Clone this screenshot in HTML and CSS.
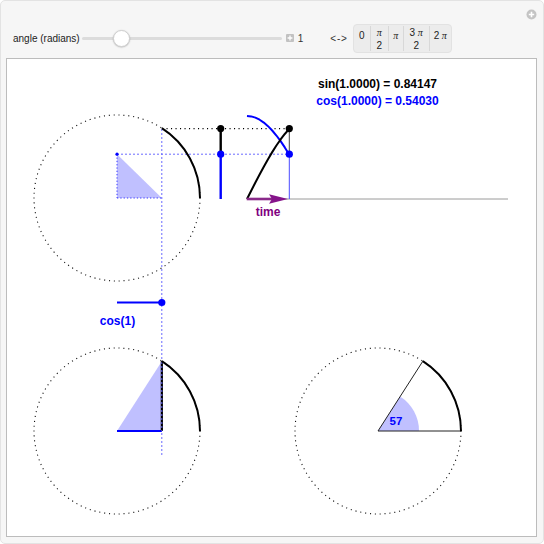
FILE: index.html
```html
<!DOCTYPE html>
<html>
<head>
<meta charset="utf-8">
<link rel="stylesheet" href="styles.css">
</head>
<body>
<div class="panel">
  <div class="corner-plus"><svg width="11" height="11" viewBox="0 0 11 11"><circle cx="5.5" cy="5.5" r="5" fill="#c4c4c4"/><path d="M5.5 2.8v5.4M2.8 5.5h5.4" stroke="#fff" stroke-width="1.6"/></svg></div>
  <div class="controls">
    <span class="label">angle (radians)</span>
    <div class="slider"><div class="track"></div><div class="thumb"></div></div>
    <span class="plus"><svg width="8" height="8" viewBox="0 0 8 8"><rect width="8" height="8" rx="1" fill="#c2c2c2"/><path d="M4 1.6v4.8M1.6 4h4.8" stroke="#fff" stroke-width="1.3"/></svg></span>
    <span class="value">1</span>
    <span class="arrows">&lt;-&gt;</span>
    <div class="group">
      <span class="item w0">0</span>
      <span class="item frac w1"><span class="pi">π</span><span class="bar"></span><span>2</span></span>
      <span class="item w2"><span class="pi">π</span></span>
      <span class="item frac w3"><span>3 <span class="pi">π</span></span><span class="bar"></span><span>2</span></span>
      <span class="item w4">2 <span class="pi">&nbsp;π</span></span>
    </div>
  </div>
  <div class="canvas">
    <svg class="plot" width="529" height="477" viewBox="7 59 529 477">
      <g fill="none" stroke="#111" stroke-width="1.1" stroke-dasharray="1.1 3.8">
        <circle cx="117" cy="198" r="83"/>
        <circle cx="117" cy="431" r="83"/>
        <circle cx="378" cy="431" r="83"/>
      </g>
      <polygon points="117,154.2 117,198 161.8,198" fill="#c0c0ff"/>
      <g fill="none" stroke="#3a3aff" stroke-width="1" stroke-dasharray="1.3 2">
        <line x1="117" y1="154.2" x2="117" y2="198"/>
        <line x1="117" y1="198" x2="161.8" y2="198"/>
      </g>
      <g fill="none" stroke="#6a6aff" stroke-width="1" stroke-dasharray="2 2">
        <line x1="117" y1="154.2" x2="289" y2="154.2"/>
        <line x1="161.8" y1="129" x2="161.8" y2="456"/>
      </g>
      <line x1="162" y1="128.6" x2="289" y2="128.6" stroke="#000" stroke-width="1.1" stroke-dasharray="1.1 3.4"/>
      <circle cx="117" cy="154.2" r="1.6" fill="#0000ff"/>
      <path d="M200 198 A83 83 0 0 0 161.85 128.16" fill="none" stroke="#000" stroke-width="2"/>
      <line x1="220.7" y1="128.6" x2="220.7" y2="154.2" stroke="#000" stroke-width="2.4"/>
      <line x1="220.7" y1="154.2" x2="220.7" y2="199" stroke="#0000ff" stroke-width="2.4"/>
      <circle cx="220.7" cy="128.6" r="3.6" fill="#000"/>
      <circle cx="220.7" cy="154.2" r="3.6" fill="#0000ff"/>
      <line x1="247" y1="199" x2="508" y2="199" stroke="#9a9a9a" stroke-width="1"/>
      <polyline points="247,116 251.2,116.41 255.4,117.65 259.6,119.71 263.8,122.55 268,126.16 272.2,130.5 276.4,135.52 280.6,141.17 284.8,147.41 289,154.16" fill="none" stroke="#0000ff" stroke-width="2" stroke-linejoin="round"/>
      <polyline points="247,199 251.2,190.71 255.4,182.51 259.6,174.47 263.8,166.68 268,159.21 272.2,152.13 276.4,145.53 280.6,139.46 284.8,133.98 289,129.16" fill="none" stroke="#000" stroke-width="2" stroke-linejoin="round"/>
      <line x1="289.3" y1="128.6" x2="289.3" y2="154.2" stroke="#444" stroke-width="1"/>
      <line x1="289.3" y1="154.2" x2="289.3" y2="199" stroke="#4a4aff" stroke-width="1"/>
      <circle cx="289.3" cy="128.6" r="3.6" fill="#000"/>
      <circle cx="289.3" cy="154.2" r="3.6" fill="#0000ff"/>
      <line x1="246.7" y1="199" x2="272" y2="199" stroke="#8a2a8a" stroke-width="2.6"/>
      <polygon points="269,194.2 288,199 269,203.8 272,199" fill="#85148a"/>
      <text class="t-time" x="268" y="216" text-anchor="middle">time</text>
      <text class="t-val" x="377.5" y="87.5" text-anchor="middle" fill="#000">sin(1.0000) = 0.84147</text>
      <text class="t-val" x="377.5" y="104.5" text-anchor="middle" fill="#0000ff">cos(1.0000) = 0.54030</text>
      <line x1="117" y1="302.5" x2="161.8" y2="302.5" stroke="#0000ff" stroke-width="2.2"/>
      <circle cx="161.8" cy="302.5" r="3.6" fill="#0000ff"/>
      <text class="t-cos" x="117.5" y="324.5" text-anchor="middle">cos(1)</text>
      <polygon points="117,431 161.85,361.16 161.85,431" fill="#c0c0ff"/>
      <line x1="117" y1="431" x2="161.85" y2="431" stroke="#0000ff" stroke-width="2.2"/>
      <line x1="161.85" y1="361.16" x2="161.85" y2="431" stroke="#000" stroke-width="2.2"/>
      <line x1="161.8" y1="362" x2="161.8" y2="431" stroke="#6a6aff" stroke-width="1" stroke-dasharray="2 2"/>
      <path d="M200 431 A83 83 0 0 0 161.85 361.16" fill="none" stroke="#000" stroke-width="2"/>
      <path d="M378 431 L419 431 A41 41 0 0 0 400.15 396.5 Z" fill="#c0c0ff"/>
      <line x1="378" y1="431" x2="461" y2="431" stroke="#222" stroke-width="1"/>
      <line x1="378" y1="431" x2="422.85" y2="361.16" stroke="#222" stroke-width="1"/>
      <path d="M461 431 A83 83 0 0 0 422.85 361.16" fill="none" stroke="#000" stroke-width="2"/>
      <text class="t-deg" x="396" y="425" text-anchor="middle">57</text>
    </svg>
  </div>
</div>
</body>
</html>
```
FILE: styles.css
```css
html, body {
  margin: 0;
  padding: 0;
  background: #ffffff;
}
.panel {
  position: relative;
  width: 544px;
  height: 544px;
  box-sizing: border-box;
  background: #f6f6f6;
  border: 1px solid #e3e3e3;
  border-radius: 5px;
  padding: 0 6px 0 5px;
  font-family: "Liberation Sans", Arial, sans-serif;
}
.corner-plus {
  position: absolute;
  top: 8px;
  right: 6px;
  width: 11px;
  height: 11px;
  line-height: 0;
}
.controls {
  display: flex;
  align-items: center;
  height: 40px;
  margin-top: 17px;
  padding-left: 7px;
  font-size: 10px;
  color: #222;
}
.label {
  white-space: nowrap;
}
.slider {
  position: relative;
  width: 200px;
  height: 16px;
  margin-left: 2px;
  display: flex;
  align-items: center;
}
.track {
  width: 100%;
  height: 3px;
  border-radius: 2px;
  background: #dcdcdc;
}
.thumb {
  position: absolute;
  left: 31.5px;
  top: 0;
  width: 15px;
  height: 15px;
  border-radius: 50%;
  background: #fff;
  border: 0.5px solid #d0d0d0;
  box-shadow: 0 0.5px 1.5px rgba(0,0,0,0.25);
}
.plus {
  margin-left: 4px;
  width: 8px;
  height: 8px;
  line-height: 0;
}
.value {
  margin-left: 4px;
  font-size: 10px;
  color: #333;
}
.arrows {
  margin-left: 27px;
  letter-spacing: 0.8px;
  color: #333;
}
.group {
  margin-left: 5px;
  display: flex;
  align-items: stretch;
  height: 29px;
  box-sizing: border-box;
  background: #ececec;
  border: 1px solid #e2e2e2;
  border-radius: 4px;
  font-size: 10px;
  color: #222;
}
.item {
  box-sizing: border-box;
  display: flex;
  flex-direction: row;
  justify-content: center;
  align-items: flex-start;
  padding-top: 4px;
  border-left: 1px solid #d8d8d8;
  margin: 1px 0;
  line-height: 11px;
  white-space: nowrap;
}
.item:first-child {
  border-left: none;
}
.w0 { width: 16px; }
.w1 { width: 18px; }
.w2 { width: 15px; }
.w3 { width: 26px; }
.w4 { width: 22px; }
.frac {
  flex-direction: column;
  align-items: center;
  padding-top: 1px;
}
.frac .bar {
  width: 11px;
  height: 0.7px;
  background: #555;
  margin: 1px 0 1px;
}
.w3 .bar {
  width: 16px;
}
.pi {
  font-family: "Liberation Serif", serif;
  font-style: italic;
}
.canvas {
  width: 531px;
  height: 479px;
  box-sizing: border-box;
  border: 1px solid #bcbcbc;
  background: #fff;
}
.plot {
  display: block;
}
.t-val {
  font-family: "Liberation Sans", Arial, sans-serif;
  font-weight: bold;
  font-size: 12px;
}
.t-cos {
  font-family: "Liberation Sans", Arial, sans-serif;
  font-weight: bold;
  font-size: 12px;
  fill: #0000ff;
}
.t-time {
  font-family: "Liberation Sans", Arial, sans-serif;
  font-weight: bold;
  font-size: 12px;
  fill: #800080;
}
.t-deg {
  font-family: "Liberation Sans", Arial, sans-serif;
  font-weight: bold;
  font-size: 11.5px;
  fill: #0000ff;
}
```
